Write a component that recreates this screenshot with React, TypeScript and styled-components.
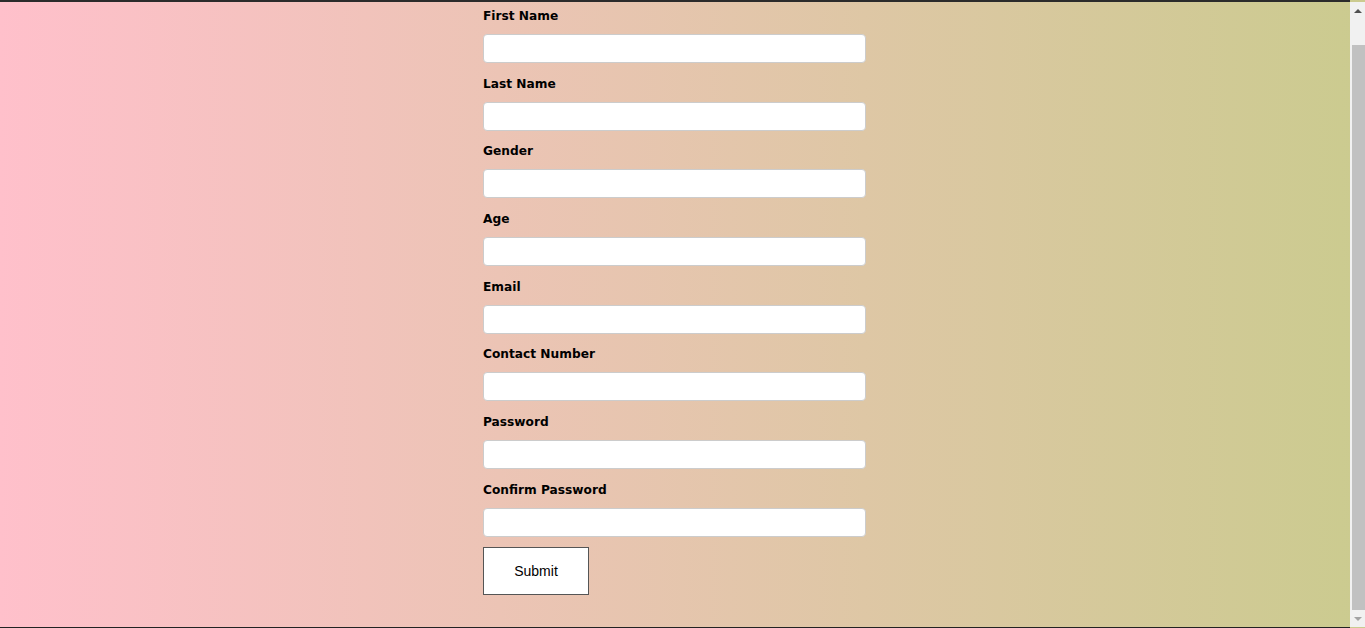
import React from "react";
import styled, { createGlobalStyle } from "styled-components";

const Global = createGlobalStyle`
  html, body { margin: 0; padding: 0; }
  html { height: 100%; }
  body {
    min-height: 100%;
    background: linear-gradient(to right, #ffc0cb, #cbcb8f);
    background-attachment: fixed;
    overflow: hidden;
  }
`;

const Page = styled.div`
  width: 1350px;
  height: 628px;
  border-top: 2px solid #2b2b2b;
  border-bottom: 1px solid #222;
  box-sizing: border-box;
  display: flex;
  justify-content: center;
  padding: 6px 0 0;
`;

const Form = styled.form`
  width: 383px;
  margin-left: -1px;
  display: flex;
  flex-direction: column;
`;

const Field = styled.div`
  display: flex;
  flex-direction: column;
  margin-bottom: 12.7px;
  &:nth-last-of-type(1) { margin-bottom: 10px; }
`;

const Label = styled.label`
  font-family: "DejaVu Sans", Verdana, sans-serif;
  font-weight: bold;
  font-size: 12.2px;
  color: #000;
  line-height: 16px;
  margin-bottom: 10px;
`;

const Input = styled.input`
  box-sizing: border-box;
  width: 383px;
  height: 29px;
  border: 1px solid #cccccc;
  border-radius: 4px;
  background: #fff;
  outline: none;
`;

const Submit = styled.button`
  box-sizing: border-box;
  width: 106px;
  height: 48px;
  background: #fff;
  border: 1px solid #555;
  font-family: "Liberation Sans", Arial, sans-serif;
  font-size: 14px;
  color: #000;
  padding: 0;
`;

const ScrollBar = styled.div`
  position: fixed;
  top: 2px;
  right: 0;
  bottom: 1px;
  width: 15px;
  background: #f1f1f1;
  display: flex;
  flex-direction: column;
`;

const Arrow = styled.div<{ $down?: boolean }>`
  height: 17px;
  display: flex;
  align-items: center;
  justify-content: center;
  &::before {
    content: "";
    width: 0;
    height: 0;
    border-left: 4px solid transparent;
    border-right: 4px solid transparent;
    ${(p) =>
      p.$down ? "border-top: 4px solid #a3a3a3;" : "border-bottom: 4px solid #505050;"}
  }
`;

const Track = styled.div`
  flex: 1;
  display: flex;
  flex-direction: column;
  padding: 26px 0 0 2px;
`;

const Thumb = styled.div`
  flex: 1;
  background: #c1c1c1;
`;

const fields = [
  "First Name",
  "Last Name",
  "Gender",
  "Age",
  "Email",
  "Contact Number",
  "Password",
  "Confirm Password",
];

export default function App() {
  return (
    <>
      <Global />
      <Page>
        <Form onSubmit={(e) => e.preventDefault()}>
          {fields.map((f) => (
            <Field key={f}>
              <Label>{f}</Label>
              <Input type={f.includes("Password") ? "password" : "text"} />
            </Field>
          ))}
          <Submit type="submit">Submit</Submit>
        </Form>
      </Page>
      <ScrollBar>
        <Arrow />
        <Track>
          <Thumb />
        </Track>
        <Arrow $down />
      </ScrollBar>
    </>
  );
}
